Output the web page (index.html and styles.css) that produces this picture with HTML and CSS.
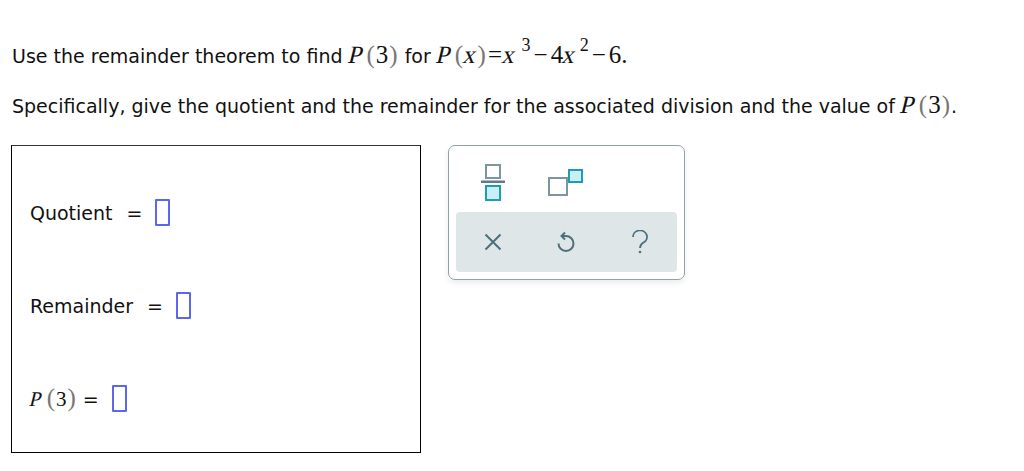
FILE: index.html
```html
<!DOCTYPE html>
<html lang="en">
<head>
    <meta charset="UTF-8">
    <title>Remainder Theorem</title>
    <link rel="stylesheet" href="styles.css">
</head>
<body>
<div class="page">
    <p class="question first">Use the remainder theorem to find <span class="math"><i>P</i><span class="paren open">(</span>3<span class="paren">)</span></span> for <span class="math"><i>P</i><span class="paren open">(</span><i>x</i><span class="paren">)</span><span class="eqop">=</span><i>x</i><sup class="wide">3</sup><span class="op">&minus;</span>4<i>x</i><sup>2</sup><span class="op">&minus;</span>6.</span></p>

    <p class="question">Specifically, give the quotient and the remainder for the associated division and the value of <span class="math"><i>P</i><span class="paren open">(</span>3<span class="paren">)</span></span>.</p>

    <div class="work">
        <div class="answerBox">
            <div class="answerRow">
                <span class="label">Quotient</span>
                <span class="eq">=</span>
                <span class="slot"></span>
            </div>
            <div class="answerRow">
                <span class="label">Remainder</span>
                <span class="eq">=</span>
                <span class="slot"></span>
            </div>
            <div class="answerRow">
                <span class="label math small"><i>P</i><span class="paren open">(</span>3<span class="paren">)</span></span>
                <span class="eq short">=</span>
                <span class="slot"></span>
            </div>
        </div>

        <div class="palette">
            <div class="toolRow top">
                <button class="tool" type="button">
                    <svg width="24" height="38" viewBox="0 0 24 38">
                        <rect x="5" y="1" width="14" height="13" fill="#fff" stroke="#7d959c" stroke-width="2"/>
                        <rect x="0" y="16.5" width="24" height="2.5" fill="#5f7d87"/>
                        <rect x="5" y="22" width="14" height="14" fill="#c9eef3" stroke="#1c9db2" stroke-width="2"/>
                    </svg>
                </button>
                <button class="tool" type="button">
                    <svg width="36" height="28" viewBox="0 0 36 28">
                        <rect x="1" y="9" width="18" height="17" fill="#fff" stroke="#7d959c" stroke-width="2"/>
                        <rect x="21" y="1" width="13" height="12" fill="#c9eef3" stroke="#1c9db2" stroke-width="2"/>
                    </svg>
                </button>
                <span class="tool"></span>
            </div>
            <div class="toolRow actions">
                <button class="tool" type="button">
                    <svg width="18" height="18" viewBox="0 0 18 18">
                        <path d="M1.5 1.5 L16.5 16.5 M16.5 1.5 L1.5 16.5" stroke="#4e6f7b" stroke-width="2" fill="none"/>
                    </svg>
                </button>
                <button class="tool" type="button">
                    <svg width="20" height="22" viewBox="0 0 20 22">
                        <path d="M6 5 H10 A7.5 7.5 0 1 1 2.5 12.5" stroke="#4e6f7b" stroke-width="2" fill="none"/>
                        <path d="M9 1.5 L5.5 5 L9 8.5" stroke="#4e6f7b" stroke-width="2" fill="none"/>
                    </svg>
                </button>
                <button class="tool" type="button">
                    <svg width="18" height="24" viewBox="0 0 18 24">
                        <path d="M2 7 A7 6.5 0 1 1 12.5 12.5 C10 14 9 15 9 18" stroke="#4e6f7b" stroke-width="1.8" fill="none"/>
                        <circle cx="9" cy="22" r="1.3" fill="#4e6f7b"/>
                    </svg>
                </button>
            </div>
        </div>
    </div>
</div>
</body>
</html>
```

FILE: styles.css
```css
body {
    font-family: "DejaVu Sans", Verdana, sans-serif;
    font-size: 19px;
    color: #111;
    margin: 0;
    padding: 0;
    background-color: #fff;
}

.page {
    padding: 40px 11px 0 11px;
}

.question {
    margin: 0 0 23px 1px;
    line-height: 32px;
    white-space: nowrap;
}

.question.first {
    margin-bottom: 18px;
}

.math {
    font-family: "Liberation Serif", "Times New Roman", serif;
    font-size: 25px;
    line-height: 20px;
}

/* variables are slanted by hand so they look italic */
.math i {
    display: inline-block;
    font-style: normal;
    transform: skewX(-14deg);
}

.paren {
    color: #777;
    margin: 0 1px;
}

.paren.open {
    margin-left: 4px;
}

.eqop {
    margin: 0 1px;
}

.op {
    margin: 0 3px;
}

.math sup {
    font-size: 18px;
    vertical-align: 12px;
    line-height: 0;
    margin-left: 4px;
}

.math sup.wide {
    margin-left: 6px;
}

.work {
    display: flex;
    align-items: flex-start;
    gap: 27px;
}

.answerBox {
    width: 410px;
    height: 308px;
    border: 1px solid #000;
    border-top-color: #333;
    padding: 20px 0 0 18px;
    box-sizing: border-box;
    display: flex;
    flex-direction: column;
}

.answerRow {
    height: 93px;
    display: flex;
    align-items: center;
}

.label.small {
    font-size: 21px;
}

.label.small .paren {
    font-size: 25px;
}

.label.small .paren.open {
    margin-left: 5px;
}

.eq {
    margin: 0 13px 0 14px;
}

.eq.short {
    margin-left: 6px;
}

.slot {
    width: 11px;
    height: 23px;
    border: 2px solid #5b67f2;
    border-radius: 1px;
}

.palette {
    width: 237px;
    height: 135px;
    box-sizing: border-box;
    border: 1px solid #8fa3a9;
    border-radius: 7px;
    box-shadow: 0 3px 6px rgba(0, 0, 0, 0.08);
    padding: 0 7px 6px 7px;
    display: flex;
    flex-direction: column;
}

.toolRow {
    display: grid;
    grid-template-columns: 1fr 1fr 1fr;
    align-items: center;
}

.toolRow.top {
    height: 66px;
    padding-top: 8px;
    box-sizing: border-box;
}

.toolRow.actions {
    height: 60px;
    background-color: #dee6e8;
    border-radius: 4px;
}

.tool {
    display: flex;
    justify-content: center;
    align-items: center;
    background: none;
    border: none;
    padding: 0;
}
```
